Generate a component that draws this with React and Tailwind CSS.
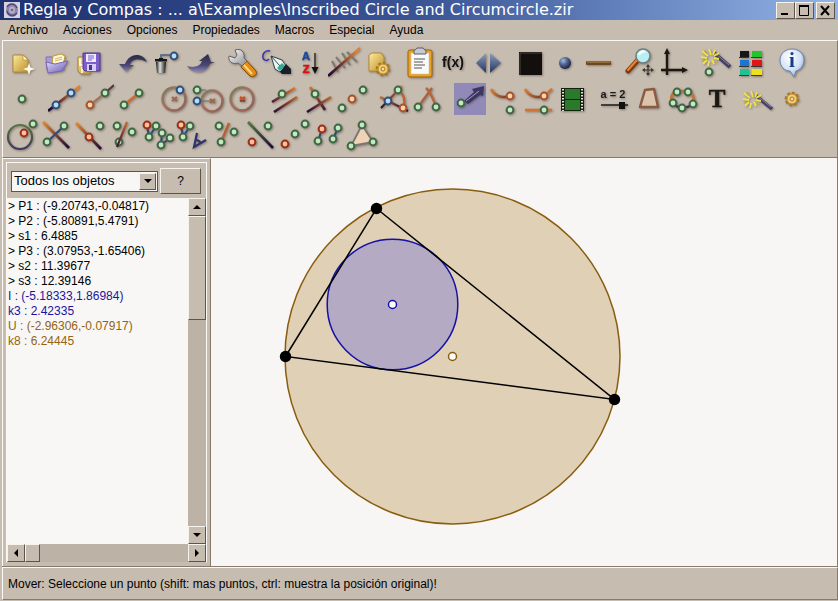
import React, { useState } from 'react';

const nodeColors = {
  green: { stroke: '#3f6645', fill: '#c4e8bf' },
  blue: { stroke: '#2f507c', fill: '#b9dcf5' },
  orange: { stroke: '#a9522a', fill: '#fbd3ae' },
  red: { stroke: '#9c2f18', fill: '#ffc0a0' }
};

const Node = ({ x, y, c = 'green' }) => (
  <circle cx={x} cy={y} r="3.4" strokeWidth="2" stroke={nodeColors[c].stroke} fill={nodeColors[c].fill} />
);

const Stroke = ({ d, c = 'url(#rise)', w = 2.2 }) => (
  <path d={d} stroke={c} strokeWidth={w} fill="none" strokeLinecap="butt" />
);

const Gear = ({ x, y }) => (
  <g>
    <circle cx={x} cy={y} r="5.8" fill="none" stroke="#a9751f" strokeWidth="3" strokeDasharray="2.6 1.8" />
    <circle cx={x} cy={y} r="5" fill="#f0cf6c" stroke="#b98a2c" strokeWidth="1" />
    <circle cx={x} cy={y} r="2" fill="#e9dcc0" stroke="#a9751f" strokeWidth="1" />
  </g>
);

const Sparks = ({ x, y }) => (
  <g transform={`translate(${x} ${y})`}>
    <path
      d="M-1 -9 1 -3M5 -8 3 -3M-8 -7 -2 -2M-9 -1 -3 0M-7 6 -3 2M-2 8 -1 3M4 6 2 2M9 1 4 0M9 -5 4 -2"
      stroke="#efe34a"
      strokeWidth="1.8"
      fill="none"
    />
    <path d="M-5 -8 -4 -5M-8 3 -5 2M6 4 8 5" stroke="#b7a830" strokeWidth="1" fill="none" />
  </g>
);

// Defs shared by all of the toolbar icons
const IconDefs = () => (
  <svg className="absolute h-0 w-0" aria-hidden="true">
    <defs>
      <linearGradient id="rise" gradientUnits="userSpaceOnUse" x1="4" y1="28" x2="28" y2="4">
        <stop offset="0" stopColor="#200c38" />
        <stop offset="0.5" stopColor="#84402f" />
        <stop offset="1" stopColor="#e38228" />
      </linearGradient>
      <linearGradient id="fall" gradientUnits="userSpaceOnUse" x1="4" y1="4" x2="28" y2="28">
        <stop offset="0" stopColor="#e38228" />
        <stop offset="0.5" stopColor="#84402f" />
        <stop offset="1" stopColor="#200c38" />
      </linearGradient>
      <linearGradient id="fallGreen" gradientUnits="userSpaceOnUse" x1="4" y1="4" x2="28" y2="28">
        <stop offset="0" stopColor="#4e7a3e" />
        <stop offset="1" stopColor="#200c38" />
      </linearGradient>
      <linearGradient id="ring" x1="0" y1="0" x2="1" y2="1">
        <stop offset="0" stopColor="#73805c" />
        <stop offset="0.4" stopColor="#a5705f" />
        <stop offset="1" stopColor="#8d6158" />
      </linearGradient>
      <linearGradient id="ringDark" x1="0" y1="0" x2="0" y2="1">
        <stop offset="0" stopColor="#55763f" />
        <stop offset="1" stopColor="#40375e" />
      </linearGradient>
      <linearGradient id="gold" x1="0" y1="0" x2="1" y2="1">
        <stop offset="0" stopColor="#fdeb9c" />
        <stop offset="1" stopColor="#bf8f2c" />
      </linearGradient>
      <linearGradient id="lilac" x1="0" y1="0" x2="1" y2="1">
        <stop offset="0" stopColor="#e0dbfc" />
        <stop offset="1" stopColor="#6a58b4" />
      </linearGradient>
      <linearGradient id="swoosh" x1="0" y1="0" x2="0" y2="1">
        <stop offset="0" stopColor="#2c2a48" />
        <stop offset="0.6" stopColor="#4a4672" />
        <stop offset="1" stopColor="#8d88b8" />
      </linearGradient>
      <linearGradient id="steel" x1="0" y1="0" x2="1" y2="1">
        <stop offset="0" stopColor="#ffffff" />
        <stop offset="1" stopColor="#8c8c90" />
      </linearGradient>
      <linearGradient id="can" x1="0" y1="0" x2="1" y2="0">
        <stop offset="0" stopColor="#111" />
        <stop offset="0.4" stopColor="#ddd" />
        <stop offset="1" stopColor="#111" />
      </linearGradient>
      <linearGradient id="slate" x1="0" y1="0" x2="0" y2="1">
        <stop offset="0" stopColor="#8c9dc0" />
        <stop offset="1" stopColor="#26355c" />
      </linearGradient>
      <radialGradient id="ball" cx="0.35" cy="0.3" r="0.7">
        <stop offset="0" stopColor="#a9b9d8" />
        <stop offset="0.5" stopColor="#4f628f" />
        <stop offset="1" stopColor="#1c2748" />
      </radialGradient>
      <radialGradient id="bubble" cx="0.4" cy="0.3" r="0.8">
        <stop offset="0" stopColor="#ffffff" />
        <stop offset="0.6" stopColor="#cfe0f6" />
        <stop offset="1" stopColor="#7d9bc9" />
      </radialGradient>
    </defs>
  </svg>
);

const icons = {
  newFile: (
    <g>
      <path d="M7 8H17L22 13V25H7Z" fill="url(#gold)" stroke="#b08a3a" />
      <path d="M17 8V13H22Z" fill="#fff6cf" stroke="#b08a3a" strokeWidth=".7" />
      <path d="M23 16 24.500 20.500 29 22 24.500 23.500 23 28 21.500 23.500 17 22 21.500 20.500Z" fill="#fffbe6" />
    </g>
  ),
  open: (
    <g>
      <path d="M6 10H12L14 12H24V23H7Z" fill="#a79bdc" stroke="#8073bd" />
      <path d="M13 9 21 7 25 9 23 18H12Z" fill="#fff6d2" stroke="#c09b3d" />
      <path d="M15 12 22 10M15 14 22 12" stroke="#c9a54a" strokeWidth=".8" />
      <path d="M6 15 15 17 28 14 22 24 8 26Z" fill="url(#lilac)" stroke="#7567b5" />
    </g>
  ),
  save: (
    <g>
      <path d="M4 10H16V27H7L4 24Z" fill="url(#gold)" stroke="#a5843a" />
      <path d="M6 12V18H9M8 20V26" stroke="#fff" strokeWidth="1.5" fill="none" />
      <path d="M9 6H26V24H11L9 22Z" fill="#7a5fc9" stroke="#5137a0" />
      <rect x="12" y="7" width="10" height="8" fill="#efeafd" />
      <path d="M14 9H20M14 11H20M14 13H18" stroke="#7a5fc9" />
      <rect x="13" y="17" width="9" height="7" fill="#d8cdf8" />
      <rect x="15" y="18" width="3" height="5" fill="#4a3394" />
    </g>
  ),
  undo: (
    <path d="M3 17 10 25 18 18 14 18C15 13 21 10 31 15C27 6 14 5 9 17Z" fill="url(#swoosh)" />
  ),
  remove: (
    <g>
      <path d="M11 11V8H21" stroke="#46618f" strokeWidth="1.6" fill="none" />
      <Node x={24} y={9} c="blue" />
      <path d="M6 15H16L15 26H7Z" fill="url(#can)" />
      <rect x="5" y="12" width="12" height="2.4" fill="#161616" />
      <rect x="9" y="11" width="4" height="1.5" fill="#161616" />
    </g>
  ),
  redo: (
    <path d="M3 19C9 21 16 20 18 14L15 14 24 7 27 15 31 15 26 17C22 27 9 28 3 19Z" fill="url(#swoosh)" />
  ),
  tools: (
    <g>
      <path d="M16 17 20 13 30 24C32 28 27 31 24 29L15 20Z" fill="#e58c14" stroke="#7c4a0e" />
      <path d="M18 18 26 27" stroke="#fbd680" strokeWidth="2" />
      <path d="M3 9 9 11 11 8 9 3C15 1 19 5 18 11L21 14 16 19 12 16C6 18 2 14 3 9Z" fill="url(#steel)" stroke="#66666a" />
    </g>
  ),
  pen: (
    <g>
      <path d="M10 4C6 3 2 6 3 11C4 14 7 14 9 12" stroke="#3a2fb0" strokeWidth="1.5" fill="none" />
      <path d="M11 9 22 13 26 19 20 25 15 22Z" fill="#eef6f4" stroke="#35424a" />
      <path d="M11 9 20 19" stroke="#35424a" />
      <path d="M22 16 25 19 20 24 17 21Z" fill="#2fae96" />
      <path d="M26 17 31 22V27H22L20 25Z" fill="#17202a" />
    </g>
  ),
  sort: (
    <g>
      <text x="12" y="13" textAnchor="middle" className="font-['Liberation_Sans'] text-[11px] font-bold" fill="#174a9c" stroke="#174a9c" strokeWidth=".5">A</text>
      <text x="12" y="26" textAnchor="middle" className="font-['Liberation_Sans'] text-[11px] font-bold" fill="#dd1010" stroke="#dd1010" strokeWidth=".7">Z</text>
      <path d="M21 6V22" stroke="#444" strokeWidth="1.8" />
      <path d="M17.500 20H24.500L21 27Z" fill="#111" />
    </g>
  ),
  ticks: (
    <g>
      <Stroke d="M4 14 10 25M8 10 17 21M14 6 22 18M19 5 29 15" c="#7d7770" w={1.8} />
      <Stroke d="M0 29 32 1" w={2.6} />
    </g>
  ),
  pageGear: (
    <g>
      <path d="M7 8 10 6H19L22 10V24H7Z" fill="url(#gold)" stroke="#b08a3a" />
      <Gear x={21} y={22} />
    </g>
  ),
  clipboard: (
    <g>
      <rect x="4" y="3" width="24" height="27" rx="2" fill="#e9a323" stroke="#a0650d" />
      <rect x="7" y="6" width="18" height="21" fill="#fafafa" stroke="#c9c2b4" strokeWidth=".6" />
      <path d="M10 12H21M10 15H19M10 18H21M10 21H18" stroke="#555" />
      <path d="M10 7V4C10 3 12 3 13 1H19C20 3 22 3 22 4V7Z" fill="#c6cad2" stroke="#5a606c" />
    </g>
  ),
  fx: (
    <text x="15" y="20" textAnchor="middle" className="font-['Liberation_Sans'] text-[14px] font-bold" fill="#111">f(x)</text>
  ),
  flip: (
    <g>
      <path d="M14 6V26L4 16Z" fill="url(#slate)" />
      <path d="M18 6V26L29 16Z" fill="url(#slate)" />
    </g>
  ),
  color: (
    <g>
      <rect x="5" y="5" width="23" height="23" fill="#120f0d" />
      <path d="M6 28V6H28" stroke="#4a4540" fill="none" />
    </g>
  ),
  dot: <circle cx="17" cy="16" r="6" fill="url(#ball)" />,
  thickness: (
    <g>
      <rect x="4" y="14" width="25" height="4" rx="1" fill="#6d4720" />
      <path d="M5 15H28" stroke="#b98d52" />
    </g>
  ),
  zoom: (
    <g>
      <path d="M14 13 4 24" stroke="#7c3a10" strokeWidth="5" strokeLinecap="round" />
      <path d="M13 13 4 23" stroke="#ee8433" strokeWidth="2" strokeLinecap="round" />
      <circle cx="19" cy="9" r="7" fill="#b8f0f2" stroke="#6f7f80" strokeWidth="1.5" />
      <path d="M15 8C16 5 19 4 21 5" stroke="#fff" strokeWidth="2" fill="none" />
      <path d="M24 18V28M19 23H29" stroke="#3a3632" strokeWidth="1.2" />
      <path d="M24 17 26 20H22ZM24 29 26 26H22ZM18 23 21 21V25ZM30 23 27 21V25Z" fill="#3a3632" />
    </g>
  ),
  axes: (
    <g>
      <path d="M9 4V28M3 23H27" stroke="#1d1712" strokeWidth="2.4" />
      <path d="M9 1 12 7H6ZM30 23 24 20V26Z" fill="#1d1712" />
    </g>
  ),
  wandPoint: (
    <g>
      <path d="M14 6 30 20" stroke="#453f63" strokeWidth="4" />
      <path d="M15 6 29 18" stroke="#8681a8" />
      <Sparks x={10} y={11} />
      <Node x={9} y={25} />
    </g>
  ),
  palette: (
    <g>
      <rect x="6" y="4" width="9" height="6" fill="#161616" />
      <rect x="18" y="4" width="10" height="6" fill="#22c52a" />
      <rect x="6" y="13" width="9" height="6" fill="#1a76d2" />
      <rect x="18" y="13" width="10" height="6" fill="#e01616" />
      <rect x="6" y="22" width="9" height="6" fill="#1fc392" />
      <rect x="18" y="22" width="10" height="6" fill="#efe01c" />
      <path d="M5 10.500H15M17 10.500H28M5 19.500H15M17 19.500H28M5 28.500H15M17 28.500H28" stroke="#3a352f" />
    </g>
  ),
  info: (
    <g>
      <path d="M16 2C23 2 28 7 28 13C28 19 24 23 20 24L18 30 14 24C8 24 4 19 4 13C4 7 9 2 16 2Z" fill="url(#bubble)" stroke="#6d84ad" />
      <text x="16" y="20" textAnchor="middle" className="font-['Liberation_Serif'] text-[21px] font-bold" fill="#173b86">i</text>
    </g>
  ),

  point: <Node x={16} y={16} />,
  line: (
    <g>
      <Stroke d="M0 28 32 3" w={2.6} />
      <Node x={8} y={22} c="blue" />
      <Node x={23} y={10} c="blue" />
    </g>
  ),
  ray: (
    <g>
      <Stroke d="M8 22 23 10" c="#a07452" />
      <Stroke d="M23 10 32 2" c="#5f3440" />
      <Node x={8} y={22} c="orange" />
      <Node x={23} y={10} />
    </g>
  ),
  segment: (
    <g>
      <Stroke d="M8 22 23 10" c="#cf6a32" w={2.6} />
      <Node x={8} y={22} />
      <Node x={23} y={10} />
    </g>
  ),
  circle: (
    <g>
      <circle cx="16" cy="16" r="11.500" fill="none" stroke="url(#ring)" strokeWidth="2.4" />
      <Stroke d="M14 14 19 18M19 14 14 18" c="#9b684a" />
      <Node x={22} y={7} c="blue" />
    </g>
  ),
  compass: (
    <g>
      <circle cx="20" cy="18" r="10.500" fill="none" stroke="url(#ring)" strokeWidth="2.4" />
      <Stroke d="M5 18H20M8 7H14" c="#77685a" w={1} />
      <Stroke d="M18 16 23 20M23 16 18 20" c="#9b684a" />
      <Node x={5} y={7} />
      <Node x={5} y={18} c="blue" />
    </g>
  ),
  fixedCircle: (
    <g>
      <circle cx="16" cy="16" r="11.500" fill="none" stroke="url(#ring)" strokeWidth="2.4" />
      <Stroke d="M14 14 19 18M19 14 14 18" c="#d0501c" w={2.4} />
      <path d="M14 18H19" stroke="#43306a" />
    </g>
  ),
  parallel: (
    <g>
      <Stroke d="M4 19 27 5M6 29 29 14" w={2.6} />
      <Node x={14} y={11} />
    </g>
  ),
  plumb: (
    <g>
      <Stroke d="M8 4 23 27" c="url(#fall)" w={2.6} />
      <Stroke d="M5 29 29 14" w={2.6} />
      <Node x={13} y={11} />
    </g>
  ),
  midpoint: (
    <g>
      <Node x={27} y={7} />
      <Node x={16} y={16} c="orange" />
      <Node x={6} y={25} />
    </g>
  ),
  angle: (
    <g>
      <Stroke d="M3 25 24 3" />
      <Stroke d="M2 14 30 28" c="url(#fall)" />
      <Stroke d="M20 7C26 11 28 18 25 25" c="#c0602f" />
      <Node x={20} y={7} />
      <Node x={10} y={18} c="blue" />
      <Node x={25} y={25} c="orange" />
    </g>
  ),
  fixedAngle: (
    <g>
      <Stroke d="M6 24 20 5" c="#a8623f" />
      <Stroke d="M14 5C18 8 21 15 24 24" c="#b8643a" />
      <Node x={6} y={24} />
      <Node x={24} y={24} />
    </g>
  ),
  move: (
    <g>
      <path d="M10 18 20 9 18 6 30 3 29 13 26 12 14 21Z" fill="#3b3760" />
      <path d="M12 18 25 8" stroke="#a39fc6" />
      <Node x={7} y={20} />
    </g>
  ),
  tracker: (
    <g>
      <Stroke d="M3 6C6 12 13 16 22 13" c="url(#fall)" w={2.6} />
      <Node x={22} y={13} c="orange" />
      <Node x={22} y={27} />
    </g>
  ),
  objectTracker: (
    <g>
      <Stroke d="M3 6C6 12 13 16 22 13" c="url(#fall)" w={2.6} />
      <Stroke d="M22 13 30 6M3 27H30" c="#cf7436" w={2.6} />
      <Node x={22} y={13} c="orange" />
      <Node x={22} y={27} />
    </g>
  ),
  film: (
    <g>
      <rect x="5" y="5" width="23" height="23" fill="#15210f" />
      <rect x="9" y="6" width="15" height="10" fill="#2b7a2b" />
      <rect x="9" y="17" width="15" height="10" fill="#2b7a2b" />
      <path d="M7 6V28M26 6V28" stroke="#e6e6dc" strokeWidth="2" strokeDasharray="1.6 1.4" />
    </g>
  ),
  expression: (
    <g>
      <text x="15" y="15" textAnchor="middle" className="font-['Liberation_Sans'] text-[11px] font-bold" fill="#1b1b1b">a = 2</text>
      <path d="M3 22H30" stroke="#111" strokeWidth="1.4" />
      <rect x="21" y="19" width="6" height="7" fill="#111" />
    </g>
  ),
  area: <path d="M13 7 22 6 26 24 8 24Z" fill="#dcc3ac" stroke="#8a5a42" strokeWidth="2.4" strokeLinejoin="round" />,
  quadric: (
    <g>
      <path d="M7 20C3 14 7 9 11 8H22C28 11 29 17 26 21" stroke="#c77234" strokeWidth="2.6" fill="none" />
      <path d="M26 21C22 26 11 26 7 20" stroke="#453055" strokeWidth="2.6" fill="none" />
      <Node x={11} y={9} />
      <Node x={22} y={9} />
      <Node x={27} y={21} />
      <Node x={16} y={25} />
      <Node x={7} y={20} />
    </g>
  ),
  text: (
    <text x="17" y="24" textAnchor="middle" className="font-['Liberation_Serif'] text-[25px] font-bold" fill="#1b1713" stroke="#1b1713" strokeWidth=".5">T</text>
  ),
  macro: (
    <g>
      <path d="M13 12 30 26" stroke="#453f63" strokeWidth="3.5" />
      <path d="M14 12 29 24" stroke="#8681a8" />
      <Sparks x={10} y={17} />
    </g>
  ),
  gear: <Gear x={16} y={16} />,

  circle3: (
    <g>
      <circle cx="14" cy="18" r="12" fill="none" stroke="url(#ringDark)" strokeWidth="2.2" />
      <Node x={18} y={14} c="red" />
      <Node x={27} y={5} />
    </g>
  ),
  bisector: (
    <g>
      <Stroke d="M3 3 29 29" c="url(#fall)" w={2.6} />
      <Stroke d="M7 23 24 7" c="#2f4a7c" />
      <Node x={7} y={23} />
      <Node x={24} y={7} />
    </g>
  ),
  reflectLine: (
    <g>
      <Stroke d="M2 4 27 30" c="url(#fall)" w={2.6} />
      <Node x={15} y={18} c="red" />
      <Node x={26} y={7} />
    </g>
  ),
  angleBisector: (
    <g>
      <Node x={9} y={7} />
      <Node x={24} y={13} />
      <Node x={11} y={23} />
      <Stroke d="M9 28 19 3" />
    </g>
  ),
  translate: (
    <g>
      <Stroke d="M5 6 7 18 14 7M20 14 19 26 28 19" c="#2f4a7c" />
      <Node x={5} y={6} c="red" />
      <Node x={14} y={7} />
      <Node x={7} y={18} />
      <Node x={20} y={14} />
      <Node x={28} y={19} />
      <Node x={19} y={26} />
    </g>
  ),
  copyAngle: (
    <g>
      <Stroke d="M5 6 7 18 14 7" c="#2f4a7c" />
      <Stroke d="M21 14 18 28 30 21M19 21C22 21 25 23 25 25" c="#2b3470" />
      <Node x={5} y={6} c="red" />
      <Node x={14} y={7} />
      <Node x={7} y={18} />
    </g>
  ),
  halfAngle: (
    <g>
      <Stroke d="M11 23 19 4" c="#b8602e" w={2.4} />
      <Node x={9} y={7} />
      <Node x={24} y={13} />
      <Node x={11} y={23} />
    </g>
  ),
  mirror: (
    <g>
      <Stroke d="M4 3 29 29" c="url(#fallGreen)" w={2.6} />
      <Node x={24} y={7} />
      <Node x={8} y={23} c="red" />
    </g>
  ),
  pointMirror: (
    <g>
      <Node x={7} y={25} c="red" />
      <Node x={17} y={15} />
      <Node x={27} y={5} />
    </g>
  ),
  vector: (
    <g>
      <Stroke d="M10 10 6 22M26 9 21 20" c="#2f4a7c" />
      <Node x={10} y={10} c="red" />
      <Node x={6} y={22} />
      <Node x={26} y={9} />
      <Node x={21} y={20} />
    </g>
  ),
  triangle: (
    <g>
      <path d="M16 6 5 27 27 23Z" fill="#efd3b8" stroke="#7d7470" strokeWidth="1.8" />
      <Node x={16} y={6} />
      <Node x={5} y={27} />
      <Node x={27} y={23} />
    </g>
  )
};

const toolRows = [
  [
    ['newFile', 'open', 'save'],
    ['undo', 'remove', 'redo'],
    ['tools', 'pen', 'sort', 'ticks', 'pageGear'],
    ['clipboard', 'fx', 'flip'],
    ['color', 'dot', 'thickness'],
    ['zoom', 'axes'],
    ['wandPoint', 'palette'],
    ['info']
  ],
  [
    ['point'],
    ['line', 'ray', 'segment'],
    ['circle', 'compass', 'fixedCircle'],
    ['parallel', 'plumb', 'midpoint'],
    ['angle', 'fixedAngle'],
    ['move', 'tracker', 'objectTracker', 'film'],
    ['expression', 'area', 'quadric', 'text'],
    ['macro', 'gear']
  ],
  [
    ['circle3', 'bisector', 'reflectLine', 'angleBisector', 'translate', 'copyAngle', 'halfAngle', 'mirror', 'pointMirror', 'vector', 'triangle']
  ]
];

const menuItems = ['Archivo', 'Acciones', 'Opciones', 'Propiedades', 'Macros', 'Especial', 'Ayuda'];

const objects = [
  { text: '> P1 : (-9.20743,-0.04817)', color: 'text-black' },
  { text: '> P2 : (-5.80891,5.4791)', color: 'text-black' },
  { text: '> s1 : 6.4885', color: 'text-black' },
  { text: '> P3 : (3.07953,-1.65406)', color: 'text-black' },
  { text: '> s2 : 11.39677', color: 'text-black' },
  { text: '> s3 : 12.39146', color: 'text-black' },
  { text: 'I : (-5.18333,1.86984)', color: 'text-[#1a14a0]' },
  { text: 'k3 : 2.42335', color: 'text-[#1a14a0]' },
  { text: 'U : (-2.96306,-0.07917)', color: 'text-[#946410]' },
  { text: 'k8 : 6.24445', color: 'text-[#946410]' }
];

const raised = 'border border-t-[#f6f2ec] border-l-[#f6f2ec] border-r-[#5d544a] border-b-[#5d544a] bg-[#c6bcb0]';

const arrows = {
  up: 'M0 4 4 0 8 4Z',
  down: 'M0 0H8L4 4Z',
  left: 'M4 0V8L0 4Z',
  right: 'M0 0V8L4 4Z'
};

const ArrowButton = ({ dir, label }) => (
  <button type="button" aria-label={label} className={`flex h-[18px] w-[18px] shrink-0 items-center justify-center ${raised}`}>
    <svg className={dir === 'up' || dir === 'down' ? 'h-1 w-2' : 'h-2 w-1'}>
      <path d={arrows[dir]} />
    </svg>
  </button>
);

const TitleBar = () => (
  <header className="flex h-5 items-center bg-linear-to-r from-[#1f3271] via-[#3a5496] to-[#93b4e6] pr-[3px] pl-1">
    <svg viewBox="0 0 16 16" className="mr-[3px] h-4 w-4 shrink-0">
      <rect width="16" height="16" fill="#d8d2e0" />
      <ellipse cx="8" cy="8" rx="6" ry="7" fill="#8b86ab" />
      <path d="M3 5C5 1 11 1 13 6M3 9C4 14 10 15 13 11" stroke="#4d4778" strokeWidth="1.4" fill="none" />
      <ellipse cx="8" cy="8" rx="3" ry="3.5" fill="#b5aed0" />
      <circle cx="8" cy="8" r="1.3" fill="#7a6a50" />
    </svg>
    <h1 className="min-w-0 flex-1 truncate font-['DejaVu_Sans',sans-serif] text-[16px] leading-5 text-white">
      Regla y Compas : ... a\Examples\Inscribed Circle and Circumcircle.zir
    </h1>
    <div className="flex">
      <button type="button" aria-label="Minimizar" className={`h-[17px] w-[19px] ${raised}`}>
        <svg viewBox="0 0 17 15" className="h-full w-full"><path d="M4 11H11" stroke="#000" strokeWidth="2" /></svg>
      </button>
      <button type="button" aria-label="Maximizar" className={`h-[17px] w-[19px] ${raised}`}>
        <svg viewBox="0 0 17 15" className="h-full w-full">
          <path d="M3.5 3V12.5H12.5V3" stroke="#000" fill="none" />
          <path d="M3 3H13" stroke="#000" strokeWidth="2" />
        </svg>
      </button>
      <button type="button" aria-label="Cerrar" className={`ml-0.5 h-[17px] w-[19px] ${raised}`}>
        <svg viewBox="0 0 17 15" className="h-full w-full"><path d="M4 3 12 12M12 3 4 12" stroke="#000" strokeWidth="2" /></svg>
      </button>
    </div>
  </header>
);

const Toolbar = ({ active, onSelect }) => (
  <div className="flex flex-col gap-1 border border-t-[#fbf9f5] border-r-[#847a6e] border-b-[#847a6e] border-l-[#fbf9f5] py-1.5 pl-[3px]">
    {toolRows.map((groups, i) => (
      <div key={i} className="flex gap-2.5">
        {groups.map((group) => (
          <div key={group[0]} className="flex gap-0.5">
            {group.map((name) => (
              <button
                key={name}
                type="button"
                aria-label={name}
                onClick={() => onSelect(name)}
                className={`h-8 w-8 shrink-0 ${active === name ? 'bg-[#918ab9]' : ''}`}
              >
                <svg viewBox="0 0 32 32" className="h-8 w-8 drop-shadow-[1px_1px_1px_rgba(60,45,30,0.45)]">{icons[name]}</svg>
              </button>
            ))}
          </div>
        ))}
      </div>
    ))}
  </div>
);

const ObjectPanel = () => (
  <aside className="flex w-[209px] shrink-0 flex-col border-t border-r border-l border-t-[#fbf9f5] border-r-[#847a6e] border-l-[#fbf9f5] p-[3px]">
    <div className="flex flex-1 flex-col border border-[#fbf9f5] border-b-[#c6bcb0]">
      <div className="flex items-center gap-0.5 pt-[5px] pr-[5px] pb-1 pl-1">
        <div className="relative flex-1">
          <select
            aria-label="Objetos"
            className="block h-[21px] w-full appearance-none border border-[#5d544a] bg-[#f8f7f5] pr-5 pl-0.5 text-[13px] leading-4 text-black"
          >
            <option>Todos los objetos</option>
          </select>
          <span className={`pointer-events-none absolute top-0.5 right-0.5 flex h-[17px] w-[17px] items-center justify-center ${raised}`}>
            <svg className="h-1 w-2"><path d={arrows.down} /></svg>
          </span>
        </div>
        <button type="button" className={`h-[26px] w-[41px] text-[12px] ${raised}`}>?</button>
      </div>
      <div className="flex flex-1">
        <ul className="flex-1 bg-[#f8f7f5] pt-px pl-px text-[12px] leading-[15px] whitespace-nowrap">
          {objects.map((o) => (
            <li key={o.text} className={o.color}>{o.text}</li>
          ))}
        </ul>
        <div className="flex w-[18px] flex-col bg-[#bcb2a6]">
          <ArrowButton dir="up" label="Subir" />
          <div className={`h-[104px] ${raised}`} />
          <div className="flex-1" />
          <ArrowButton dir="down" label="Bajar" />
        </div>
      </div>
      <div className="flex bg-[#bcb2a6]">
        <ArrowButton dir="left" label="Izquierda" />
        <div className={`w-[15px] ${raised}`} />
        <div className="flex-1" />
        <ArrowButton dir="right" label="Derecha" />
      </div>
    </div>
  </aside>
);

const Drawing = () => (
  <div className="flex min-w-0 flex-1 bg-[#f7f6f5]">
    <svg className="min-w-0 flex-1">
      <circle cx="241.5" cy="198.5" r="167.5" fill="#dfd0b6" stroke="#8a5c0c" strokeWidth="1.5" />
      <circle cx="181.5" cy="146.5" r="65.3" fill="#b4aac4" stroke="#1410a8" strokeWidth="1.5" />
      <path d="M74.5 198.5 165.5 50.5 403.5 241.5Z" fill="none" stroke="#000" strokeWidth="1.5" />
      <circle cx="74.5" cy="198.5" r="5.7" />
      <circle cx="165.5" cy="50.5" r="5.7" />
      <circle cx="403.5" cy="241.5" r="5.7" />
      <circle cx="181.5" cy="146.5" r="4" fill="#fff" stroke="#1410a8" strokeWidth="1.5" />
      <circle cx="241.5" cy="198.5" r="4" fill="#fff" stroke="#8a5c0c" strokeWidth="1.5" />
    </svg>
  </div>
);

const App = () => {
  const [tool, setTool] = useState('move');

  return (
    <div className="flex min-h-screen flex-col bg-[#c6bcb0] font-['Liberation_Sans',Arial,sans-serif] text-[12px] text-black">
      <IconDefs />
      <TitleBar />
      <nav className="flex h-5 items-center gap-[15px] pl-2">
        {menuItems.map((item) => (
          <button key={item} type="button" className="leading-4">{item}</button>
        ))}
      </nav>
      <div className="flex flex-1 flex-col pl-0.5">
        <Toolbar active={tool} onSelect={setTool} />
        <main className="flex flex-1 border-r border-b border-[#847a6e]">
          <ObjectPanel />
          <Drawing />
        </main>
        <footer className="mb-px flex h-[33px] items-center border border-t-[#fbf9f5] border-r-[#847a6e] border-b-[#847a6e] border-l-[#fbf9f5] pl-[5px]">
          Mover: Seleccione un punto (shift: mas puntos, ctrl: muestra la posición original)!
        </footer>
      </div>
    </div>
  );
};

export default App;
